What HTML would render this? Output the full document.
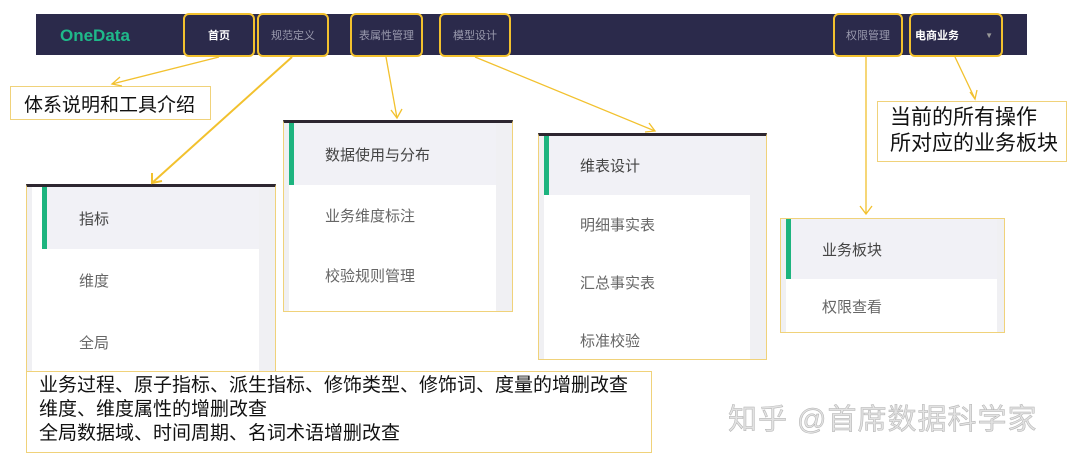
<!DOCTYPE html>
<html><head><meta charset="utf-8"><style>
*{margin:0;padding:0;box-sizing:border-box}
body{width:1080px;height:460px;background:#fff;position:relative;overflow:hidden;font-family:"Liberation Sans","Noto Sans CJK SC",sans-serif}
.a{position:absolute}
.nav{left:36px;top:14px;width:991px;height:41px;background:#2b2a4b}
.logo{left:60px;top:26px;color:#1fb98a;font-weight:bold;font-size:17px}
.nb{border:2.5px solid #f2c12e;border-radius:6px;height:44px;top:13px;color:#9a9aae;font-size:11px;display:flex;align-items:center;justify-content:center}
.nb.w{color:#fff;font-weight:bold}
.box{border:1px solid #f0d27a;background:#fff;color:#111}
.panel{border:1px solid #f0d27a;background:#fff;border-top:3px solid #2d2630;overflow:hidden}
.panel .strip{position:absolute;right:0;top:0;bottom:0;width:16px;background:#f0f0f3}
.panel .ls{position:absolute;left:0;top:0;bottom:0;width:5px;background:#f0f0f3}
.row{position:absolute;left:5px;right:16px;color:#666;font-size:15px;padding-left:36px;display:flex;align-items:center}
.row.on{background:#f1f1f6;color:#444}
.row.on:before{content:"";position:absolute;left:0;top:0;bottom:0;width:5px;background:#1db47f}
</style></head><body>
<div class="a nav"></div>
<div class="a logo">OneData</div>
<div class="a nb w" style="left:183px;width:72px">首页</div>
<div class="a nb" style="left:257px;width:72px">规范定义</div>
<div class="a nb" style="left:350px;width:73px">表属性管理</div>
<div class="a nb" style="left:439px;width:72px">模型设计</div>
<div class="a nb" style="left:833px;width:70px">权限管理</div>
<div class="a nb w" style="left:909px;width:94px;justify-content:flex-start;padding-left:4px">电商业务<span style="position:absolute;right:8px;color:#999;font-size:8px">▼</span></div>

<div class="a box" style="left:10px;top:86px;width:201px;height:34px;font-size:19px;padding:3px 0 0 13px">体系说明和工具介绍</div>
<div class="a box" style="left:877px;top:101px;width:190px;height:61px;font-size:21px;line-height:26px;padding:3px 0 0 12px;white-space:nowrap">当前的所有操作<br>所对应的业务板块</div>

<div class="a panel" style="left:26px;top:184px;width:250px;height:190px"><div class="ls"></div><div class="strip"></div>
<div class="row on" style="top:0;height:62px;left:15px;padding-left:37px">指标</div>
<div class="row" style="top:62px;height:62px;left:15px;padding-left:37px">维度</div>
<div class="row" style="top:124px;height:62px;left:15px;padding-left:37px">全局</div></div>

<div class="a panel" style="left:283px;top:120px;width:230px;height:192px"><div class="ls"></div><div class="strip"></div>
<div class="row on" style="top:0;height:62px">数据使用与分布</div>
<div class="row" style="top:62px;height:60px">业务维度标注</div>
<div class="row" style="top:122px;height:60px">校验规则管理</div></div>

<div class="a panel" style="left:538px;top:133px;width:229px;height:227px"><div class="ls"></div><div class="strip"></div>
<div class="row on" style="top:0;height:59px">维表设计</div>
<div class="row" style="top:59px;height:58px">明细事实表</div>
<div class="row" style="top:117px;height:58px">汇总事实表</div>
<div class="row" style="top:175px;height:58px">标准校验</div></div>

<div class="a panel" style="left:780px;top:218px;width:225px;height:115px;border-top:1px solid #f0d27a"><div class="ls"></div><div class="strip" style="width:7px"></div>
<div class="row on" style="top:0;height:60px;right:7px">业务板块</div>
<div class="row" style="top:60px;height:55px;right:7px">权限查看</div></div>

<div class="a box" style="left:26px;top:371px;width:626px;height:82px;font-size:19px;line-height:24px;padding:2px 0 0 12px;white-space:nowrap">业务过程、原子指标、派生指标、修饰类型、修饰词、度量的增删改查<br>维度、维度属性的增删改查<br>全局数据域、时间周期、名词术语增删改查</div>

<div class="a" style="left:728px;top:396px;font-size:29px;color:#e2e2e2;-webkit-text-stroke:0.5px #b0b0b0;letter-spacing:1px;font-weight:normal">知乎 @首席数据科学家</div>

<svg class="a" style="left:0;top:0" width="1080" height="460" fill="none" stroke="#f2c12e" stroke-width="1.3">
<line x1="219" y1="57" x2="112" y2="84"/><polyline points="120,77 112,84 122,86"/>
<line x1="292" y1="57" x2="152" y2="183" stroke-width="2"/><polyline points="152,173 152,183 162,181" stroke-width="2"/>
<line x1="386" y1="57" x2="397" y2="118"/><polyline points="391,110 397,118 402,109"/>
<line x1="475" y1="57" x2="655" y2="131"/><polyline points="645,132 655,131 649,123"/>
<line x1="866" y1="57" x2="866" y2="214"/><polyline points="860,206 866,214 872,206"/>
<line x1="955" y1="57" x2="975" y2="99"/><polyline points="970,92 975,99 977,90"/>
</svg>
</body></html>
